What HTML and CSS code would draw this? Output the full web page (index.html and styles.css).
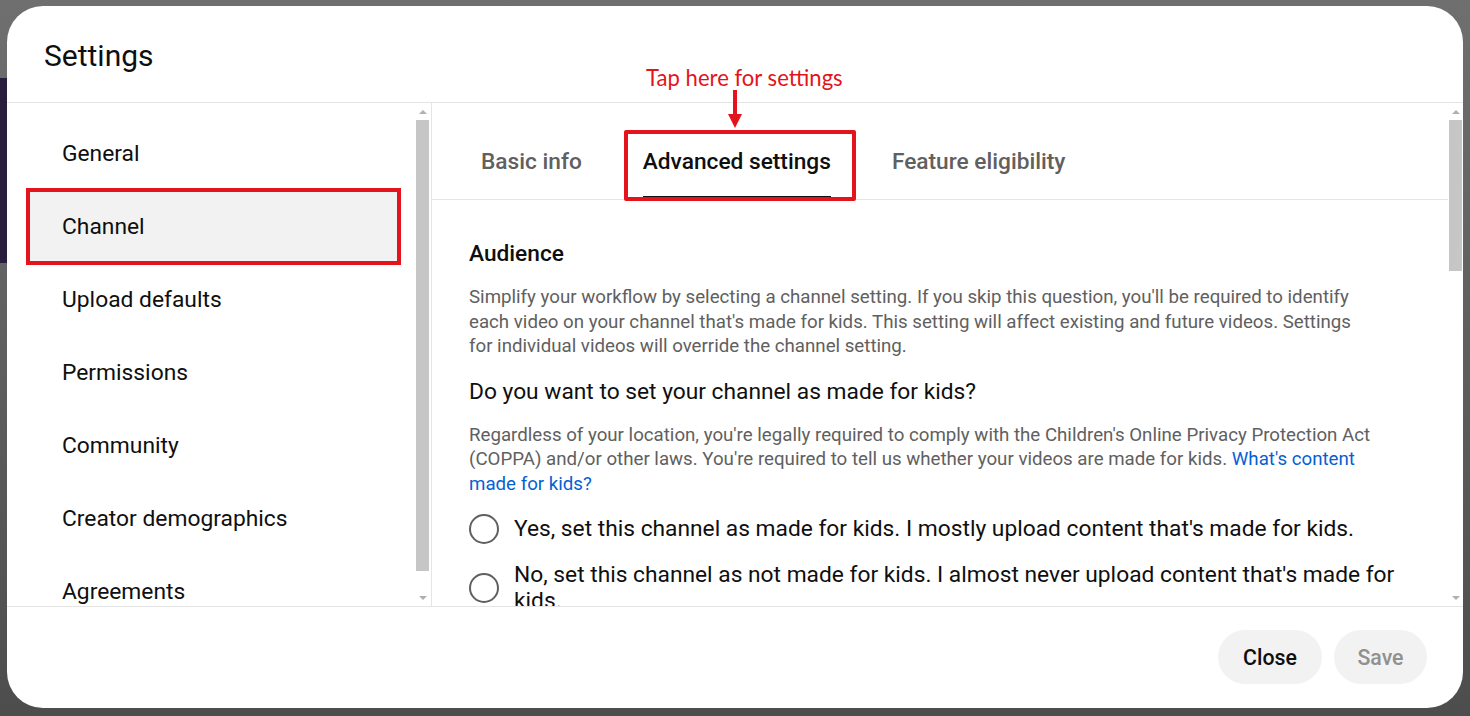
FILE: index.html
```html
<!DOCTYPE html>
<html lang="en">
<head>
<meta charset="utf-8">
<title>Settings</title>
<link rel="stylesheet" href="styles.css">
</head>
<body>
<div class="page">
  <div class="dialog">
    <div class="annot">
      <span class="annot-text">Tap here for settings</span>
      <svg class="annot-arrow" viewBox="0 0 14 38" width="14" height="38"><rect x="5" y="0" width="4" height="26" fill="#e3141b"/><polygon points="0,24 14,24 7,38" fill="#e3141b"/></svg>
    </div>
    <header class="head"><h1>Settings</h1></header>
    <div class="body">
      <nav class="nav">
        <ul class="navlist">
          <li>General</li>
          <li class="sel">Channel</li>
          <li>Upload defaults</li>
          <li>Permissions</li>
          <li>Community</li>
          <li>Creator demographics</li>
          <li>Agreements</li>
        </ul>
        <div class="sbar">
          <span class="arr up"></span>
          <span class="track"><span class="thumb thumb-l"></span></span>
          <span class="arr down"></span>
        </div>
      </nav>
      <main class="main">
        <div class="col">
          <div class="tabs">
            <div class="tab">Basic info</div>
            <div class="tab active">Advanced settings</div>
            <div class="tab">Feature eligibility</div>
          </div>
          <div class="content">
            <h2 class="title">Audience</h2>
            <p class="desc">Simplify your workflow by selecting a channel setting. If you skip this question, you'll be required to identify each video on your channel that's made for kids. This setting will affect existing and future videos. Settings for individual videos will override the channel setting.</p>
            <h3 class="question">Do you want to set your channel as made for kids?</h3>
            <p class="desc desc2">Regardless of your location, you're legally required to comply with the Children's Online Privacy Protection Act (COPPA) and/or other laws. You're required to tell us whether your videos are made for kids. <a class="link" href="#">What's content made for kids?</a></p>
            <div class="radio r1"><span class="circle"></span><span class="label">Yes, set this channel as made for kids. I mostly upload content that's made for kids.</span></div>
            <div class="radio r2"><span class="circle"></span><span class="label">No, set this channel as not made for kids. I almost never upload content that's made for kids.</span></div>
          </div>
        </div>
        <div class="sbar sbar-r">
          <span class="arr up"></span>
          <span class="track"><span class="thumb thumb-r"></span></span>
          <span class="arr down"></span>
        </div>
      </main>
    </div>
    <footer class="foot">
      <button class="btn btn-close">Close</button>
      <button class="btn btn-save">Save</button>
    </footer>
  </div>
</div>
</body>
</html>
```
FILE: styles.css
```css
* { box-sizing: border-box; }
html, body { margin: 0; height: 100%; }
body {
  background:
    linear-gradient(#2a1c3c, #2a1c3c) 0 78px / 7px 185px no-repeat,
    linear-gradient(#6f6f6f, #4d4d4d);
  font-family: Roboto, "Noto Sans", sans-serif;
  overflow: hidden;
  color: #0f0f0f;
}
.page { padding: 6px 7px 8px 7px; height: 716px; }
.dialog {
  position: relative;
  width: 1456px;
  height: 702px;
  background: #fff;
  border-radius: 36px;
  display: flex;
  flex-direction: column;
  overflow: hidden;
}

/* annotation */
.annot { position: absolute; left: 639px; top: 59px; width: 210px; height: 70px; z-index: 5; }
.annot-text {
  display: block;
  font-family: Lato, "Open Sans", sans-serif;
  font-size: 22.1px;
  line-height: 26px;
  color: #e3141b;
  white-space: nowrap;
}
.annot-arrow { position: absolute; left: 82px; top: 25px; }

/* header */
.head { height: 97px; border-bottom: 1px solid #e5e5e5; padding: 32px 0 0 37px; flex: none; }
.head h1 { margin: 0; font-size: 30px; font-weight: 400; line-height: 36px; color: #0f0f0f; }

/* body */
.body { display: flex; height: 504px; border-bottom: 1px solid #e5e5e5; flex: none; }
.nav { width: 425px; display: flex; border-right: 1px solid #e5e5e5; padding-right: 2px; flex: none; }
.navlist { list-style: none; margin: 0; padding: 14px 0 0; flex: 1; overflow: hidden; }
.navlist li {
  height: 73px;
  margin: 0 17px 0 21px;
  padding-left: 34px;
  display: flex;
  align-items: center;
  font-size: 22.8px;
  color: #0f0f0f;
}
.navlist li.sel { background: #f2f2f2; outline: 4px solid #e3141b; outline-offset: -2px; }

.sbar { width: 13px; display: flex; flex-direction: column; flex: none; }
.sbar-r { width: 15px; padding-left: 1px; padding-right: 1px; }
.arr { height: 17px; display: flex; align-items: center; justify-content: center; flex: none; }
.arr.up::before { content: ""; border-left: 4px solid transparent; border-right: 4px solid transparent; border-bottom: 4px solid #b0b0b0; }
.arr.down::before { content: ""; border-left: 4px solid transparent; border-right: 4px solid transparent; border-top: 4px solid #b0b0b0; }
.track { flex: 1; display: block; }
.thumb { display: block; background: #c6c6c6; }
.thumb-l { height: 451px; }
.thumb-r { height: 151px; }

.main { flex: 1; display: flex; min-width: 0; }
.col { flex: 1; display: flex; flex-direction: column; min-width: 0; }
.tabs { height: 97px; border-bottom: 1px solid #e5e5e5; display: flex; gap: 61px; padding-left: 49px; flex: none; }
.tab {
  position: relative;
  height: 96px;
  padding-top: 46px;
  font-size: 22.7px;
  font-weight: 500;
  line-height: 26px;
  color: #606060;
  border-bottom: 3px solid transparent;
  white-space: nowrap;
}
.tab.active { color: #0f0f0f; border-bottom-color: #0f0f0f; }
.tab.active::after {
  content: "";
  position: absolute;
  left: -19px;
  right: -25px;
  top: 27px;
  height: 63px;
  border: 4px solid #e3141b;
  border-radius: 2px;
}

.content { flex: 1; overflow: hidden; padding: 40px 0 0 37px; }
.title { margin: 0; font-size: 22.7px; font-weight: 500; line-height: 28px; color: #0f0f0f; }
.desc { margin: 17px 0 0; font-size: 18.7px; line-height: 24.5px; color: #606060; max-width: 905px; }
.question { margin: 19px 0 0; font-size: 22.75px; font-weight: 400; line-height: 28px; color: #0f0f0f; }
.desc2 { margin-top: 17px; }
.link { color: #065fd4; text-decoration: none; }
.radio { display: flex; align-items: center; gap: 15px; font-size: 22.75px; line-height: 26px; color: #0f0f0f; }
.r1 { margin-top: 18px; }
.r2 { margin-top: 18px; }
.label { max-width: 905px; }
.circle { width: 30px; height: 30px; border: 2.5px solid #606060; border-radius: 50%; flex: none; }

/* footer */
.foot { flex: 1; display: flex; justify-content: flex-end; gap: 12px; padding: 23px 36px 0 0; }
.btn {
  height: 54px;
  border-radius: 27px;
  border: 0;
  background: #f2f2f2;
  font-family: Roboto, "Noto Sans", sans-serif;
  font-size: 21.3px;
  font-weight: 500;
  color: #0f0f0f;
  padding: 0;
}
.btn-close { width: 104px; }
.btn-save { width: 93px; color: #909090; }
```
